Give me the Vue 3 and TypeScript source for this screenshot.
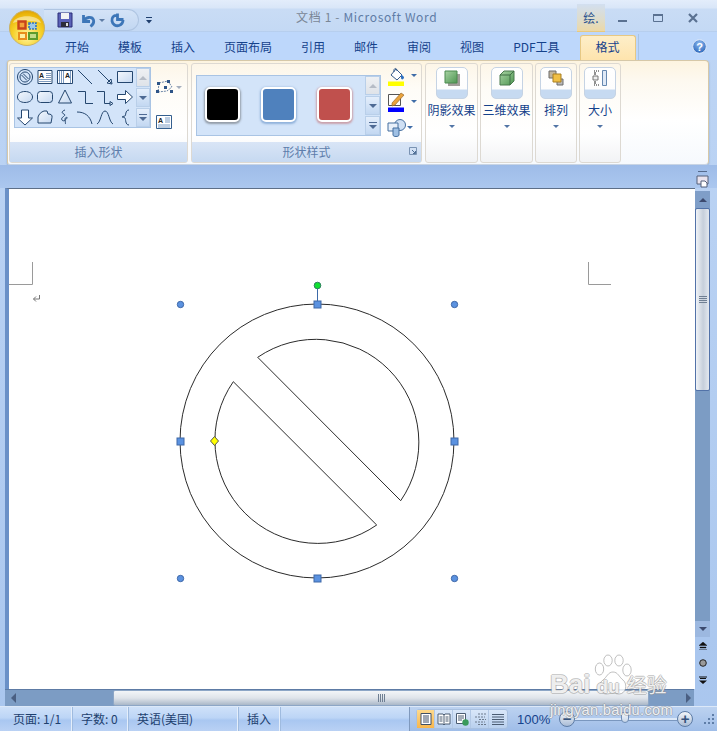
<script setup lang="ts">
const tabs = ['开始', '模板', '插入', '页面布局', '引用', '邮件', '审阅', '视图', 'PDF工具']

interface Shape { id: string; d: string; fill?: string; lines?: string; letter?: number }
const shapes: Shape[] = [
  { id: 'no', d: 'M10 2.500a7.500 7.500 0 1 0 .01 0ZM10 5a5 5 0 1 0 .01 0ZM6.500 8l5.500 5.500M8 6.500l5.500 5.500' },
  { id: 'tb', d: 'M3 3.500h14v13H3Z', fill: '#ffffff', lines: 'M11 6.500h5M11 8.500h5M11 10.500h5M4 12.500h12M4 14.500h12', letter: 4 },
  { id: 'vtb', d: 'M2.500 3.500h15v13h-15Z', fill: '#ffffff', lines: 'M4.500 4v12M6.500 4v12M8.500 4v12M15.500 4v12', letter: 10 },
  { id: 'line', d: 'M3 3l14 14' },
  { id: 'arrow', d: 'M3 3l13 13M17 17l-1-5-4 4Z' },
  { id: 'rect', d: 'M2.500 4.500h15v11h-15Z', fill: 'url(#shapeFill)' },
  { id: 'oval', d: 'M10 4.500c4.500 0 7.500 2.300 7.500 5.500s-3 5.500-7.500 5.500-7.500-2.300-7.500-5.500 3-5.500 7.500-5.500Z', fill: 'url(#shapeFill)' },
  { id: 'rrect', d: 'M5.500 4.500h9a3 3 0 0 1 3 3v5a3 3 0 0 1-3 3h-9a3 3 0 0 1-3-3v-5a3 3 0 0 1 3-3Z', fill: 'url(#shapeFill)' },
  { id: 'tri', d: 'M10 3l6.500 13h-13Z', fill: 'url(#shapeFill)' },
  { id: 'elbow', d: 'M3 4.500h7.500v12H18' },
  { id: 'elbowa', d: 'M2 4.500h7.500v12H15M18 16.500l-3-2v4Z' },
  { id: 'rarrow', d: 'M2.500 7.500h8v-4l7 6.500-7 6.500v-4h-8Z', fill: '#ffffff' },
  { id: 'darrow', d: 'M6.500 3h7v8h4L10 18l-7.500-7h4Z', fill: '#ffffff' },
  { id: 'snip', d: 'M3 16V10c1-3 3-5 6-6h3l1 3c3 0 4.500 1 4 3.500l-1 5.500Z', fill: 'url(#shapeFill)' },
  { id: 'free', d: 'M10 3c-3 1-4 3-1 4 3 2-4 3-2 6 1 2 4 0 5-2 1-1-2-1-2 1 0 3 1 5 0 5' },
  { id: 'curve', d: 'M2 5c8 0 13 4 15 12' },
  { id: 'wave', d: 'M2 17c4-2 4-13 8-13s4 11 8 13' },
  { id: 'brace', d: 'M14 3c-4 0-3 6-4 6s-3 1-3 1 2 0 3 1 0 7 4 7' },
]

const buttons = [
  { label: '阴影效果', cls: 'wide' },
  { label: '三维效果', cls: 'wide' },
  { label: '排列', cls: 'mid' },
  { label: '大小', cls: 'small' },
]
</script>

<template>
  <div class="win">
    <svg width="0" height="0" class="defs">
      <defs>
        <linearGradient id="shapeFill" x1="0" y1="0" x2="1" y2="1">
          <stop offset="0" stop-color="#f4f8fd" /><stop offset="1" stop-color="#c6d9f1" />
        </linearGradient>
        <radialGradient id="orb" cx=".5" cy=".72" r=".75">
          <stop offset="0" stop-color="#fff7a8" /><stop offset=".55" stop-color="#f6d02a" /><stop offset=".85" stop-color="#eab308" /><stop offset="1" stop-color="#d99a06" />
        </radialGradient>
        <linearGradient id="green" x1="0" y1="0" x2="1" y2="1">
          <stop offset="0" stop-color="#a9d3a4" /><stop offset="1" stop-color="#4d9651" />
        </linearGradient>
        <radialGradient id="helpBall" cx=".5" cy=".3" r=".8">
          <stop offset="0" stop-color="#8db8ee" /><stop offset="1" stop-color="#1f5cb4" />
        </radialGradient>
      </defs>
    </svg>

    <header class="titlebar">
      <svg class="orb" viewBox="0 0 40 40" width="40" height="40">
        <circle cx="20" cy="20" r="17.500" fill="url(#orb)" stroke="#c9b266" stroke-width="1" />
        <path d="M6 15c2-9 26-9 28 0-8-3-20-3-28 0Z" fill="#ffffff" opacity=".45" />
        <path d="M11.500 13.500h7v7h-7Z" fill="#f3a13a" stroke="#c9431a" stroke-width="2.400" />
        <path d="M22 15h7v6h-7Z" fill="#9cc8e8" stroke="#3476b8" stroke-width="1.600" stroke-dasharray="2 1" />
        <path d="M12 25h7v6h-7Z" fill="#fff0a0" stroke="#e88e1c" stroke-width="2" />
        <path d="M22 25h8v6h-8Z" fill="#c0dc88" stroke="#5d9c2c" stroke-width="2" />
      </svg>
      <div class="qat">
        <svg viewBox="0 0 16 16" width="16" height="16">
          <path d="M1 1h14v14H1Z" fill="#5b62b8" stroke="#2a2d78" />
          <path d="M4 1h8v6H4Z" fill="#f4f4f4" />
          <path d="M4 10h8v5H4Z" fill="#2d2d3a" />
          <path d="M9 11h2v3H9Z" fill="#ddd" />
        </svg>
        <svg viewBox="0 0 16 16" width="16" height="16" class="undo">
          <path d="M3.500 3v6.500H10M4 9C5.500 5 12 4 13.500 8c.8 3-1 5-3 6.500" fill="none" stroke="#3d76b8" stroke-width="2.800" />
        </svg>
        <span class="mini-caret"></span>
        <svg viewBox="0 0 16 16" width="16" height="16" class="redo">
          <path d="M7.500 1.500v6h6M7 3.500C3.500 3 1.500 6 2 9c.5 3.500 4 5.500 7 4.500s4-3 4-5.500" fill="none" stroke="#3d76b8" stroke-width="2.800" />
        </svg>
      </div>
      <svg class="qat-more" viewBox="0 0 8 8" width="8" height="8">
        <path d="M1 1h6v1H1ZM1 4h6L4 7.500Z" fill="#1f3f6e" />
      </svg>
      <div class="title">文档 1 - <span class="title-app">Microsoft Word</span></div>
      <div class="ctx">绘.</div>
      <div class="winctl">
        <svg viewBox="0 0 12 12" width="12" height="12"><path d="M1 8h9v2H1Z" fill="#5a7191" /></svg>
        <svg viewBox="0 0 12 12" width="12" height="12"><path d="M1.500 2.500h9v7h-9Z" fill="none" stroke="#5a7191" /><path d="M1 2h10v2H1Z" fill="#5a7191" /></svg>
        <svg viewBox="0 0 12 12" width="12" height="12"><path d="M2 2l8 8M10 2l-8 8" stroke="#5a7191" stroke-width="2.200" /></svg>
      </div>
    </header>

    <nav class="tabs">
      <span v-for="t in tabs" :key="t" class="tab">{{ t }}</span>
      <span class="tab-active">格式</span>
      <span class="tab-sep"></span>
      <svg class="help" viewBox="0 0 15 15" width="15" height="15">
        <circle cx="7.500" cy="7.500" r="6.800" fill="url(#helpBall)" stroke="#dfe9f7" />
        <text x="7.500" y="11.500" text-anchor="middle" class="help-q">?</text>
      </svg>
    </nav>

    <section class="ribbon">
      <div class="group g1">
        <div class="group-body g1-body">
          <div class="gallery">
            <div class="shape-grid">
              <svg v-for="s in shapes" :key="s.id" viewBox="0 0 20 20" width="20" height="20">
                <path :d="s.d" :fill="s.fill || 'none'" stroke="#25476f" stroke-width="1" />
                <path v-if="s.lines" :d="s.lines" fill="none" stroke="#7f9cc0" />
                <text v-if="s.letter" :x="s.letter" y="11" class="glyph-a">A</text>
              </svg>
            </div>
            <div class="gal-btns">
              <span class="gal-btn"><i class="up dim"></i></span>
              <span class="gal-btn"><i class="down"></i></span>
              <span class="gal-btn"><b class="bar"></b><i class="down"></i></span>
            </div>
          </div>
          <div class="edit-col">
            <div class="edit-row">
              <svg viewBox="0 0 18 14" width="18" height="14">
                <path d="M3 3L12 1 16 7 11 11 2 12Z" fill="none" stroke="#6b86a8" stroke-dasharray="2 1" />
                <path d="M1 2h3v3H1ZM11 0h3v3h-3ZM8 6h3v3H8ZM14 10h3v3h-3ZM0 10h3v3H0Z" fill="#2d5487" />
              </svg>
              <i class="caret light"></i>
            </div>
            <svg viewBox="0 0 16 14" width="16" height="14">
              <path d="M.5.500h15v13H.5Z" fill="#fff" stroke="#35608f" />
              <text x="2" y="8" class="glyph-a">A</text>
              <path d="M9 3h5M9 5h5M9 7h5M2 10h12M2 12h12" stroke="#7b9cc4" />
            </svg>
          </div>
        </div>
        <footer class="group-foot">插入形状</footer>
      </div>

      <div class="group g2">
        <div class="group-body g2-body">
          <div class="styles">
            <div class="swatches">
              <span class="swatch black"></span>
              <span class="swatch blue"></span>
              <span class="swatch red"></span>
            </div>
            <div class="gal-btns tall">
              <span class="gal-btn"><i class="up dim"></i></span>
              <span class="gal-btn"><i class="down"></i></span>
              <span class="gal-btn"><b class="bar"></b><i class="down"></i></span>
            </div>
          </div>
          <div class="fmt-col">
            <div class="fmt-row">
              <svg viewBox="0 0 18 20" width="18" height="20">
                <path d="M4 9l5-6 6 6-5 5Z" fill="#fff" stroke="#355a8a" />
                <path d="M7 6c-1-4 3-5 3-1" fill="none" stroke="#355a8a" />
                <path d="M14 8l3 3c0 3-3 3-3 1Z" fill="#2c6fc0" />
                <path d="M1 15.500h16v4.500H1Z" fill="#ffff00" />
              </svg>
              <i class="caret"></i>
            </div>
            <div class="fmt-row">
              <svg viewBox="0 0 18 20" width="18" height="20">
                <path d="M1.500 2.500h12v11h-12Z" fill="#fff" stroke="#555" />
                <path d="M5 11L14 1l3 2-9 10-3 1Z" fill="#e9a33d" stroke="#8a5a20" stroke-width=".6" />
                <path d="M1 15.500h16v4.500H1Z" fill="#0000ff" />
              </svg>
              <i class="caret"></i>
            </div>
            <div class="fmt-row tight">
              <svg viewBox="0 0 20 18" width="20" height="18">
                <circle cx="13" cy="6" r="5.500" fill="#cfe0f4" stroke="#456f9f" />
                <path d="M1 4h10v8H1Z" fill="#e8f0fa" stroke="#456f9f" />
                <path d="M6 9h6v7c0 2-6 2-6 0Z" fill="#9fc0e4" stroke="#456f9f" />
              </svg>
              <i class="caret"></i>
            </div>
          </div>
        </div>
        <footer class="group-foot">
          形状样式
          <svg class="launcher" viewBox="0 0 8 8" width="8" height="8">
            <path d="M.5.500h7v7h-7Z" fill="none" stroke="#7a93b3" /><path d="M3 3l3.500 3.500M6.500 4v2.500H4" fill="none" stroke="#4f6f96" />
          </svg>
        </footer>
      </div>

      <div v-for="(b, i) in buttons" :key="b.label" class="group big" :class="b.cls">
        <div class="big-btn">
          <svg v-if="i === 0" viewBox="0 0 16 16" width="16" height="16">
            <path d="M4 4h12v12H4Z" fill="#77736d" opacity=".7" />
            <path d="M1 1h12v12H1Z" fill="url(#green)" stroke="#4a8a4e" />
          </svg>
          <svg v-else-if="i === 1" viewBox="0 0 16 16" width="16" height="16">
            <path d="M1 5l4-4h10v10l-4 4H1Z" fill="url(#green)" stroke="#4a7a4e" />
            <path d="M1 5h10v10M11 5l4-4" fill="none" stroke="#3f6f44" />
          </svg>
          <svg v-else-if="i === 2" viewBox="0 0 16 16" width="16" height="16">
            <path d="M1 1h7v7H1Z" fill="#c2b59c" stroke="#6d6d6d" />
            <path d="M9 9h6v6H9Z" fill="#b8b8b8" stroke="#6d6d6d" />
            <path d="M5 4h8v8H5Z" fill="#f0bf45" stroke="#a97f20" />
          </svg>
          <svg v-else viewBox="0 0 16 16" width="16" height="16">
            <path d="M2 1h6M2 15h6" stroke="#222" stroke-dasharray="1 1" />
            <path d="M3 2v3M3 11v3" stroke="#222" />
            <path d="M1 6h5v4H1Z" fill="#eee" stroke="#777" />
            <path d="M10.500.500h4v15h-4Z" fill="#dfe9f6" stroke="#6688b0" />
          </svg>
        </div>
        <span class="big-label">{{ b.label }}</span>
        <i class="caret"></i>
      </div>
    </section>

    <div class="ruler-strip">
      <span class="ruler-dash"></span>
      <svg viewBox="0 0 13 13" width="13" height="13">
        <path d="M1 1h11v8H1Z" fill="#e9e3ee" stroke="#55607a" />
        <path d="M5 6h4l2 2v4H5Z" fill="#fff" stroke="#55607a" />
      </svg>
    </div>

    <div class="middle">
      <main class="doc">
        <svg class="canvas" viewBox="9 189 686 500" width="686" height="500">
          <path d="M32.500 262v22.500H9M588.500 262v22.500H611" fill="none" stroke="#9a9a9a" />
          <path d="M39.500 295v4h-6M36 296.500l-2.500 2.500 2.500 2.500" fill="none" stroke="#777" />

          <circle cx="317" cy="441" r="137" fill="#fff" stroke="#2b2b2b" />
          <path d="M257.700 357.300A103 103 0 0 1 400.700 500.700Z" fill="#fff" stroke="#2b2b2b" />
          <path d="M233.300 381.700A103 103 0 0 0 376.700 525Z" fill="#fff" stroke="#2b2b2b" />

          <path d="M317.500 286v18" stroke="#3d6aa8" />
          <circle cx="317.500" cy="285.500" r="3.300" fill="#10e030" stroke="#2f7f5f" />
          <g fill="#5b92e0" stroke="#3f68a8">
            <circle cx="180.500" cy="304.500" r="3.200" />
            <circle cx="454.500" cy="304.500" r="3.200" />
            <circle cx="180.500" cy="578.500" r="3.200" />
            <circle cx="454.500" cy="578.500" r="3.200" />
            <rect x="314" y="301" width="7" height="7" />
            <rect x="314" y="575" width="7" height="7" />
            <rect x="177" y="438" width="7" height="7" />
            <rect x="451" y="438" width="7" height="7" />
          </g>
          <path d="M214.500 436.500l4 4.500-4 4.500-4-4.500Z" fill="#ffff00" stroke="#555" />
        </svg>
      </main>
      <aside class="vscroll">
        <span class="v-end"><i class="up dark"></i></span>
        <div class="v-thumb">
          <span class="grip"></span>
        </div>
        <div class="v-track"></div>
        <span class="v-end low"><i class="down dark"></i></span>
        <div class="browse">
          <svg viewBox="0 0 8 8" width="8" height="8"><path d="M0 3.500L4 0l4 3.500ZM1 5h6v1H1ZM0 7.500h8" fill="#111" stroke="#111" stroke-width=".4" /></svg>
          <svg viewBox="0 0 8 8" width="8" height="8"><circle cx="4" cy="4" r="3.300" fill="#999" stroke="#222" /></svg>
          <svg viewBox="0 0 8 8" width="8" height="8"><path d="M0 4.500L4 8l4-3.500ZM1 2h6v1H1ZM0 .500h8v1H0Z" fill="#111" /></svg>
        </div>
      </aside>
    </div>

    <div class="hscroll">
      <span class="h-track"><i class="left"></i></span>
      <div class="h-thumb"><span class="h-grip"></span></div>
      <span class="h-end"><i class="right"></i></span>
    </div>

    <footer class="status">
      <span class="seg s1">页面: 1/1</span>
      <span class="seg s2">字数: 0</span>
      <span class="seg s3">英语(美国)</span>
      <span class="seg s4">插入</span>
      <span class="status-fill"></span>
      <div class="status-right">
        <div class="views">
          <span class="view on"><svg viewBox="0 0 14 14" width="14" height="14"><path d="M2 1.500h10v11H2ZM4 4h6M4 6h6M4 8h6M4 10h6" fill="#fff" stroke="#3e4f66" /></svg></span>
          <span class="view"><svg viewBox="0 0 14 14" width="14" height="14"><path d="M1 2h5l1 1 1-1h5v10H8l-1 1-1-1H1ZM7 3v10M2.500 5h3M2.500 7h3M2.500 9h3M8.500 5h3M8.500 7h3M8.500 9h3" fill="#fff" stroke="#4b5c72" /></svg></span>
          <span class="view"><svg viewBox="0 0 14 14" width="14" height="14"><path d="M1.500 1.500h9v10h-9ZM3 4h6M3 6h6M3 8h4" fill="#fff" stroke="#4b5c72" /><circle cx="10.500" cy="10.500" r="3.200" fill="#3a9a5a" /></svg></span>
          <span class="view"><svg viewBox="0 0 14 14" width="14" height="14"><path d="M5 2h8M2 5h10M6 7.500h7M2 10h10M5 12.500h8" fill="none" stroke="#6c7a8c" stroke-dasharray="2 1" /></svg></span>
          <span class="view"><svg viewBox="0 0 14 14" width="14" height="14"><path d="M1 2.500h12M1 5h12M1 7.500h12M1 10h12M1 12.500h12" fill="none" stroke="#4b5c72" /></svg></span>
        </div>
        <span class="zoom-pct">100%</span>
        <span class="zoom-btn">−</span>
        <div class="zoom-track"><span class="zoom-knob"></span></div>
        <span class="zoom-btn">+</span>
        <svg class="size-grip" viewBox="0 0 12 12" width="12" height="12">
          <path d="M9 1h2v2H9ZM5 5h2v2H5ZM9 5h2v2H9ZM1 9h2v2H1ZM5 9h2v2H5ZM9 9h2v2H9Z" fill="#5f7ea8" />
        </svg>
      </div>
    </footer>

    <div class="watermark">
      <svg class="wm-paw-svg" viewBox="0 0 38 44" width="38" height="44">
        <g fill="rgba(255,255,255,.82)" stroke="rgba(140,140,140,.55)">
          <ellipse cx="5.500" cy="15" rx="4.200" ry="6" />
          <ellipse cx="14" cy="6.500" rx="4.200" ry="5.500" />
          <ellipse cx="25" cy="6.500" rx="4.200" ry="5.500" />
          <ellipse cx="33" cy="16" rx="4.200" ry="6" />
          <path d="M19 18c5 0 6 5 10 8 5 4 3 14-4 14-3 0-4-1-6-1s-4 1-7 1c-7 0-9-10-3-14 4-3 5-8 10-8Z" />
        </g>
      </svg>
      <div class="wm-main">Bai<span class="wm-du">du</span><span class="wm-cn">经验</span></div>
      <div class="wm-sub">jingyan.baidu.com</div>
    </div>
  </div>
</template>

<style scoped>
.defs { position: absolute; }
.win {
  position: relative;
  width: 717px;
  height: 731px;
  overflow: hidden;
  display: flex;
  flex-direction: column;
  background: linear-gradient(#bfd6f5 0, #a9c6ee 100%);
  font-family: "Noto Sans CJK SC", "Noto Sans", sans-serif;
  font-size: 12px;
  color: #15428b;
}
i { display: block; }

/* title bar */
.titlebar {
  position: relative;
  height: 32px;
  flex: none;
  display: flex;
  align-items: center;
  background: linear-gradient(#e3edfb 0, #d9e6f8 8px, #c9dcf5 9px, #c4d9f4 31px, #a9c4e8 32px);
}
.orb { position: absolute; left: 7px; top: 8px; z-index: 3; }
.qat {
  margin: 8px 0 0 44px;
  padding-left: 13px;
  width: 95px;
  height: 22px;
  box-sizing: border-box;
  display: flex;
  align-items: center;
  border: 1px solid #afc5e2;
  border-left: none;
  border-radius: 0 12px 12px 0;
  background: linear-gradient(#d4e3f7, #c2d7f2);
}
.undo { margin-left: 7px; }
.mini-caret {
  margin: 0 5px 0 3px;
  border: 3px solid transparent;
  border-top: 3px solid #5f7da5;
  border-bottom: none;
}
.qat-more { margin: 8px 0 0 6px; }
.title {
  position: absolute;
  left: 296px;
  top: 8px;
  font-size: 12px;
  line-height: 17px;
  color: #7a8696;
  letter-spacing: .65px;
  white-space: nowrap;
}
.title-app { color: #5f7ca6; }
.ctx {
  position: absolute;
  left: 577px;
  top: 4px;
  width: 28px;
  height: 28px;
  box-sizing: border-box;
  padding-top: 5px;
  text-align: center;
  font-size: 12px;
  color: #27508d;
  background: linear-gradient(#d2dff0, #dfdcc9 60%, #ecd8a6);
  border-bottom: 1px solid #e8c97e;
}
.winctl {
  position: absolute;
  left: 617px;
  top: 12px;
  display: flex;
  gap: 23px;
}

/* tabs */
.tabs {
  position: relative;
  flex: none;
  height: 28px;
  padding-left: 65px;
  display: flex;
  gap: 29px;
  align-items: center;
  background: #bdd7fb;
}
.tab { line-height: 17px; color: #15428b; white-space: nowrap; margin-top: 1px; }
.tab-active {
  margin: 3px 0 -1px -9px;
  align-self: stretch;
  width: 56px;
  height: 25px;
  box-sizing: border-box;
  text-align: center;
  padding-top: 2px;
  border: 1px solid #e6c884;
  border-bottom: none;
  border-radius: 3px 3px 0 0;
  background: linear-gradient(#fdeec9, #fee4ad);
  color: #15428b;
  z-index: 2;
}
.tab-sep { width: 1px; height: 26px; background: #a9c4e4; margin: 2px 0 0 -27px; }
.help { position: absolute; left: 692px; top: 7px; }
.help-q { font: bold 11px "Liberation Sans", sans-serif; fill: #fff; }

/* ribbon */
.ribbon {
  flex: none;
  height: 105px;
  margin: 0 8px 0 7px;
  padding: 2px 2px 1px 1px;
  box-sizing: border-box;
  display: flex;
  gap: 2px;
  border-radius: 3px 4px 4px 3px;
  border: 1px solid #d6c8a8;
  border-bottom-color: #c8d4e4;
  background: linear-gradient(#fdf4e0 0, #fdf9f0 20px, #ffffff 60px, #f6f9fd 100%);
  box-shadow: 0 1px 2px #8aa6cd;
}
.group {
  box-sizing: border-box;
  height: 100%;
  display: flex;
  flex-direction: column;
  border: 1px solid #ddd9d2;
  border-radius: 3px;
  background: linear-gradient(#fdf6e8 0, #fefcf7 25px, #ffffff 70px, #f2f3f5 100%);
}
.group-body { flex: 1; display: flex; min-height: 0; }
.group-foot {
  position: relative;
  height: 20px;
  flex: none;
  text-align: center;
  line-height: 20px;
  color: #5d7dab;
  background: linear-gradient(#d9e5f6, #c6d9f1);
}
.g1 { width: 179px; margin-right: 1px; }
.g1-body { padding: 3px 0 0 4px; }
.gallery, .styles {
  display: flex;
  box-sizing: border-box;
  border: 1px solid #a9c4e4;
  background: #d3e4f9;
}
.gallery { width: 137px; height: 61px; }
.shape-grid {
  width: 121px;
  display: grid;
  grid-template-columns: repeat(6, 20px);
  grid-auto-rows: 20px;
  margin-top: -1px;
}
.gal-btns { display: flex; flex-direction: column; width: 14px; gap: 1px; }
.gal-btns.tall { width: 15px; margin: 0 0 0 auto; }
.gal-btn {
  position: relative;
  flex: 1;
  display: flex;
  flex-direction: column;
  gap: 2px;
  align-items: center;
  justify-content: center;
  background: linear-gradient(#e4eefb, #c3d8f2);
  border: 1px solid #b9cfe9;
  box-sizing: border-box;
}
.gal-btn:first-child { background: linear-gradient(#eef0f3, #dfe3e9); }
.up { width: 0; height: 0; border: 4px solid transparent; border-top: none; border-bottom: 4px solid #4e6a94; }
.down { width: 0; height: 0; border: 4px solid transparent; border-bottom: none; border-top: 4px solid #4e6a94; }
.up.dim { border-bottom-color: #b6bcc6; }
.bar { display: block; width: 8px; height: 1px; background: #4e6a94; }
.up.dark { border-bottom-color: #3c4a6e; }
.down.dark { border-top-color: #3c4a6e; }
.edit-col {
  margin-left: 5px;
  display: flex;
  flex-direction: column;
  align-items: flex-start;
  gap: 21px;
  padding-top: 13px;
}
.edit-row { display: flex; align-items: center; gap: 2px; }
.caret {
  width: 0;
  height: 0;
  border: 3px solid transparent;
  border-bottom: none;
  border-top: 3px solid #3f6da8;
}
.caret.light { border-top-color: #a4aebd; }

.g2 { width: 231px; margin-right: 1px; }
.g2-body { padding: 11px 0 0 4px; }
.styles { width: 185px; height: 61px; }
.swatches { display: flex; gap: 21px; padding: 11px 0 0 8px; }
.swatch {
  width: 35px;
  height: 35px;
  box-sizing: border-box;
  border: 2px solid #fff;
  border-radius: 5px;
  box-shadow: 0 1px 2px 1px rgba(70, 70, 70, .45);
}
.swatch.black { background: #000; }
.swatch.blue { background: #4f81bd; box-shadow: 0 1px 2px 1px rgba(79, 129, 189, .5); }
.swatch.red { background: #c0504d; box-shadow: 0 1px 2px 1px rgba(192, 80, 77, .45); }
.fmt-col {
  margin-left: 6px;
  margin-top: -10px;
  display: flex;
  flex-direction: column;
  gap: 5px;
}
.fmt-row { display: flex; align-items: center; gap: 6px; height: 21px; }
.fmt-row.tight { gap: 0; }
.launcher { position: absolute; right: 4px; top: 5px; }

.big {
  align-items: center;
  padding-top: 3px;
}
.wide { width: 53px; }
.mid { width: 42px; }
.small { width: 42px; }
.big-btn {
  box-sizing: border-box;
  width: 32px;
  height: 32px;
  display: flex;
  justify-content: center;
  padding-top: 2px;
  border: 1px solid #c5d3e4;
  border-radius: 5px;
  background: linear-gradient(#fff 0, #fdfdfd 21px, #c6daf1 22px, #c6daf1 100%);
}
.big-label {
  margin-top: 2px;
  line-height: 18px;
  white-space: nowrap;
  color: #15428b;
}
.big .caret { margin-top: 6px; border-top-color: #5275a5; }

/* ruler strip */
.ruler-strip {
  flex: none;
  height: 23px;
  display: flex;
  flex-direction: column;
  align-items: flex-end;
  padding: 6px 8px 0 0;
  box-sizing: border-box;
  background: linear-gradient(#9ebce8, #abc7ef);
  position: relative;
}
.ruler-dash { width: 9px; height: 1px; background: #556a8c; margin: 0 2px 3px 0; }

/* middle */
.middle {
  flex: 1;
  min-height: 0;
  display: flex;
  padding-left: 5px;
}
.doc {
  box-sizing: border-box;
  width: 690px;
  background: #fff;
  border-left: 4px solid #6a90c7;
  border-top: 1px solid #5d6f88;
}
.canvas { display: block; }
.vscroll {
  width: 15px;
  margin-top: 3px;
  display: flex;
  flex-direction: column;
  align-items: stretch;
  background: #7c9cc4;
}
.v-end {
  height: 17px;
  flex: none;
  display: flex;
  align-items: center;
  justify-content: center;
  background: #7f9ec8;
}
.v-end.low { height: 16px; background: #9cb8e0; }
.v-thumb {
  height: 183px;
  flex: none;
  box-sizing: border-box;
  display: flex;
  align-items: center;
  justify-content: center;
  border: 1px solid #5272a8;
  border-radius: 2px;
  background: linear-gradient(90deg, #f0f3f7, #c6cfdb 55%, #e3e8ef);
}
.grip {
  width: 8px;
  height: 7px;
  background: repeating-linear-gradient(#6f7f93 0 1px, transparent 1px 2px);
}
.v-track { flex: 1; }
.browse {
  height: 52px;
  flex: none;
  display: flex;
  flex-direction: column;
  align-items: center;
  gap: 9px;
  padding-top: 5px;
  box-sizing: border-box;
  background: #a9c6ee;
}

/* horizontal scrollbar */
.hscroll {
  flex: none;
  height: 17px;
  margin: 0 23px 0 5px;
  display: flex;
  background: #7c9cc4;
  border-top: 1px solid #5d7ba5;
  box-sizing: border-box;
}
.h-track {
  width: 108px;
  display: flex;
  align-items: center;
  padding-left: 6px;
  box-sizing: border-box;
}
.left { border: 5px solid transparent; border-left: none; border-right: 5px solid #4a5f82; }
.right { border: 5px solid transparent; border-right: none; border-left: 5px solid #4a5f82; }
.h-thumb {
  width: 536px;
  display: flex;
  align-items: center;
  justify-content: center;
  box-sizing: border-box;
  border: 1px solid #8da6c6;
  border-radius: 2px;
  background: linear-gradient(#f3f5f8, #dfe4ea 50%, #aab7c8);
}
.h-grip {
  width: 7px;
  height: 8px;
  background: repeating-linear-gradient(90deg, #6f7f93 0 1px, transparent 1px 2px);
}
.h-end {
  flex: 1;
  display: flex;
  align-items: center;
  justify-content: flex-end;
  padding-right: 3px;
}

/* status */
.status {
  flex: none;
  height: 25px;
  display: flex;
  box-sizing: border-box;
  border-top: 1px solid #dce8f8;
  background: linear-gradient(#cfe1f9, #bcd5f6 45%, #a9c7f1 55%, #b9d1f4);
  color: #1d3f6e;
  line-height: 23px;
}
.seg {
  box-sizing: border-box;
  white-space: nowrap;
  border-right: 1px solid #e4eefb;
  box-shadow: 1px 0 0 #9fbbdf;
  padding-left: 13px;
}
.s1 { width: 72px; }
.s2 { width: 56px; padding-left: 9px; }
.s3 { width: 110px; padding-left: 9px; }
.s4 { width: 42px; padding-left: 9px; }
.status-fill { flex: 1; }
.status-right {
  width: 308px;
  display: flex;
  align-items: center;
  box-sizing: border-box;
  border-left: 1px solid #7f99bd;
  padding-left: 6px;
  background: linear-gradient(#bcd2f0, #9fbde8);
}
.views {
  display: flex;
  height: 18px;
  border: 1px solid #a8c0e0;
  border-radius: 3px;
  background: linear-gradient(#d9e7f9, #b9d0ee);
}
.view {
  width: 18px;
  box-sizing: border-box;
  display: flex;
  align-items: center;
  justify-content: center;
  border-right: 1px solid #b2c8e5;
}
.view:last-child { border-right: none; }
.view.on { background: linear-gradient(#fdd98c, #f8b64c); }
.zoom-pct { margin-left: 9px; font-size: 13px; color: #15428b; font-family: "Liberation Sans", sans-serif; }
.zoom-btn {
  width: 16px;
  height: 16px;
  flex: none;
  box-sizing: border-box;
  border: 1px solid #5d7ca6;
  border-radius: 50%;
  background: linear-gradient(#f4f7fb, #a9bcd6);
  color: #34527c;
  font: bold 15px/13px "Liberation Sans", sans-serif;
  text-align: center;
}
.zoom-pct + .zoom-btn { margin-left: 9px; }
.zoom-track {
  position: relative;
  width: 102px;
  height: 2px;
  background: #dce8f8;
  border-bottom: 1px solid #7a97bf;
}
.zoom-knob {
  position: absolute;
  left: 46px;
  top: -6px;
  width: 8px;
  height: 11px;
  box-sizing: border-box;
  border: 1px solid #6f8db5;
  border-radius: 2px 2px 4px 4px;
  background: linear-gradient(#f4f7fb, #c6d5e8);
}
.size-grip { margin-left: 10px; }

/* watermark */
.watermark {
  position: absolute;
  left: 550px;
  top: 650px;
  width: 170px;
  color: rgba(255, 255, 255, .85);
  text-shadow: 1px 0 0 rgba(140, 140, 140, .45), -1px 0 0 rgba(140, 140, 140, .45), 0 1px 0 rgba(140, 140, 140, .45), 0 -1px 0 rgba(140, 140, 140, .45);
  pointer-events: none;
  z-index: 5;
  font-family: "Liberation Sans", sans-serif;
}
.wm-paw-svg { position: absolute; left: 44px; top: 4px; }
.wm-main {
  position: relative;
  margin-top: 20px;
  font-size: 26px;
  font-weight: bold;
  line-height: 28px;
  white-space: nowrap;
}
.wm-du { font-size: 19px; margin-left: 6px; }
.wm-cn { font-family: "Noto Sans CJK SC", sans-serif; font-size: 20px; font-weight: 400; margin-left: 7px; }
.wm-sub { position: relative; font-size: 14.500px; line-height: 18px; letter-spacing: .35px; white-space: nowrap; }
.glyph-a { font: bold 7px "Liberation Sans", sans-serif; fill: #222; }
</style>
